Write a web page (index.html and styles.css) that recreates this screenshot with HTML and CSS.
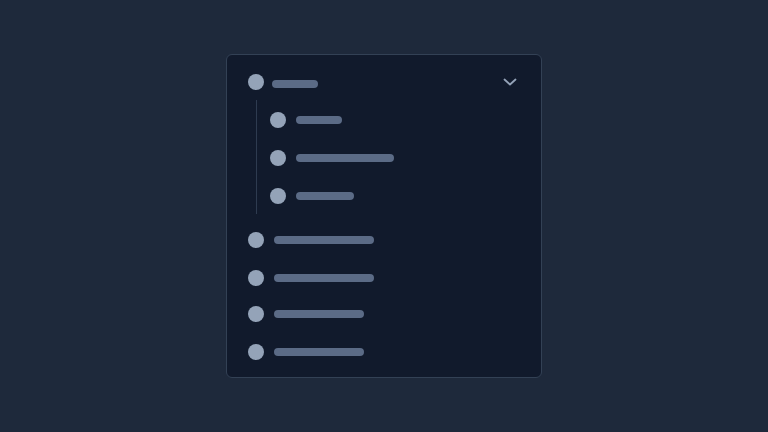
FILE: index.html
```html
<!DOCTYPE html>
<html lang="en">
<head>
<meta charset="utf-8">
<title>Tree</title>
<link rel="stylesheet" href="styles.css">
</head>
<body>
<div class="panel">
  <div class="row parent">
    <span class="dot"></span>
    <span class="bar bar-top" style="width:46px"></span>
    <svg class="chev" width="14" height="8" viewBox="0 0 14 8" aria-hidden="true"><polyline points="1.5,1.5 7,6.5 12.5,1.5" fill="none" stroke="#94a3b8" stroke-width="1.8" stroke-linecap="round" stroke-linejoin="round"/></svg>
  </div>
  <div class="children">
    <div class="row child"><span class="dot"></span><span class="bar" style="width:46px"></span></div>
    <div class="row child"><span class="dot"></span><span class="bar" style="width:98px"></span></div>
    <div class="row child"><span class="dot"></span><span class="bar" style="width:58px"></span></div>
  </div>
  <div class="row top r5"><span class="dot"></span><span class="bar" style="width:100px"></span></div>
  <div class="row top r6"><span class="dot"></span><span class="bar" style="width:100px"></span></div>
  <div class="row top r7"><span class="dot"></span><span class="bar" style="width:90px"></span></div>
  <div class="row top r8"><span class="dot"></span><span class="bar" style="width:90px"></span></div>
</div>
</body>
</html>
```
FILE: styles.css
```css
html, body {
  margin: 0;
  padding: 0;
  background: #1e293b;
  font-family: "Inter", "Liberation Sans", sans-serif;
}
body {
  padding-top: 54px;
  height: 432px;
  box-sizing: border-box;
}
.panel {
  width: 316px;
  height: 324px;
  box-sizing: border-box;
  margin: 0 auto;
  border: 1px solid #334155;
  border-radius: 6px;
  background: #111a2c;
  padding: 19px 24px 16px 21px;
  display: flex;
  flex-direction: column;
}
.row {
  display: flex;
  align-items: center;
  height: 16px;
}
.dot {
  width: 16px;
  height: 16px;
  border-radius: 50%;
  background: #94a3b8;
  flex: none;
}
.bar {
  height: 8px;
  border-radius: 4px;
  background: #5b6b86;
  margin-left: 10px;
  flex: none;
}
.bar-top {
  margin-left: 8px;
  margin-top: 4px;
}
.chev {
  margin-left: auto;
  display: block;
  flex: none;
}
.children {
  margin-top: 10px;
  margin-left: 8px;
  border-left: 1px solid #2e3b50;
  padding: 12px 0 10px 13px;
  display: flex;
  flex-direction: column;
  gap: 22px;
}
.r5 { margin-top: 18px; }
.r6 { margin-top: 22px; }
.r7 { margin-top: 20px; }
.r8 { margin-top: 22px; }
```
